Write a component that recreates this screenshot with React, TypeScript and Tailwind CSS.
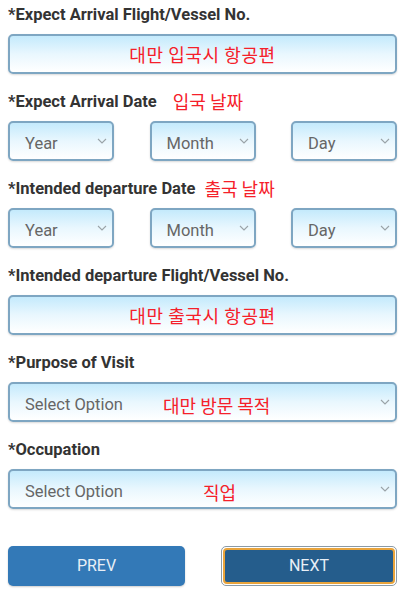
import React from 'react';

const box =
  'h-[40px] rounded-[5px] border-2 border-[#7ea6c2] bg-gradient-to-b from-[#c4eafc] via-[#e9f7fe] to-white shadow-[0_1px_2px_rgba(0,0,0,0.15)]';

const Label: React.FC<{ text: string; note?: string; noteClass?: string }> = ({ text, note, noteClass }) => (
  <div className="flex items-center h-[22px] mb-2">
    <span className="text-[16.5px] font-bold text-[#333] tracking-[0px]">{text}</span>
    {note && <span className={`text-[18px] text-[#f5202a] font-['Noto_Sans_CJK_KR'] -mt-[2px] ${noteClass ?? ''}`}>{note}</span>}
  </div>
);

const Chevron = () => (
  <svg width="10" height="6" viewBox="0 0 10 6" className="shrink-0">
    <path d="M1 1l4 4 4-4" fill="none" stroke="#9aa3a8" strokeWidth="1.1" />
  </svg>
);

const Select: React.FC<{ text: string; note?: string; noteLeft?: string; className?: string }> = ({ text, note, noteLeft, className }) => (
  <div className={`${box} relative flex items-center pl-[15px] pr-[5px] ${className ?? ''}`}>
    <div className="flex-1 mt-[4px]">
      <span className="block text-[16.5px] leading-[21px] text-[#666]">{text}</span>
    </div>
    {note && (
      <span className={`absolute top-[8px] text-[18px] text-[#f5202a] font-['Noto_Sans_CJK_KR'] ${noteLeft}`}>{note}</span>
    )}
    <Chevron />
  </div>
);

const TextBox: React.FC<{ note: string }> = ({ note }) => (
  <div className={`${box} flex items-center justify-center`}>
    <span className="text-[18px] text-[#f5202a] font-['Noto_Sans_CJK_KR'] tracking-[0.6px]">{note}</span>
  </div>
);

const DateRow = () => (
  <div className="flex justify-between">
    <Select text="Year" className="w-[106px]" />
    <Select text="Month" className="w-[106px]" />
    <Select text="Day" className="w-[106px]" />
  </div>
);

export default function App() {
  return (
    <div className="w-[402px] h-[597px] bg-white pl-2 pr-[5px] pt-[4px] font-['Roboto','Noto_Sans_CJK_KR',sans-serif] overflow-hidden">
      <div className="flex flex-col gap-[17px]">
        <div>
          <Label text="*Expect Arrival Flight/Vessel No." />
          <TextBox note="대만 입국시 항공편" />
        </div>
        <div>
          <Label text="*Expect Arrival Date" note="입국 날짜" noteClass="ml-[16px]" />
          <DateRow />
        </div>
        <div>
          <Label text="*Intended departure Date" note="출국 날짜" noteClass="ml-[9px]" />
          <DateRow />
        </div>
        <div>
          <Label text="*Intended departure Flight/Vessel No." />
          <TextBox note="대만 출국시 항공편" />
        </div>
        <div>
          <Label text="*Purpose of Visit" />
          <Select text="Select Option" note="대만 방문 목적" noteLeft="left-[153px]" />
        </div>
        <div>
          <Label text="*Occupation" />
          <Select text="Select Option" note="직업" noteLeft="left-[193px]" />
        </div>
      </div>
      <div className="flex justify-between mt-[37px]">
        <button className="w-[177px] h-[40px] rounded-[5px] bg-[#3379b7] text-[#e8eff6] text-[16px] shadow-[0_1px_2px_rgba(0,0,0,0.2)]">
          PREV
        </button>
        <button className="w-[176px] h-[40px] rounded-[5px] border border-[#8a9aa6] p-[1px] bg-white">
          <div className="w-full h-full rounded-[4px] border-2 border-[#e9a43c] bg-[#255d8c] text-[#e8eff6] text-[16px] flex items-center justify-center">
            NEXT
          </div>
        </button>
      </div>
    </div>
  );
}
